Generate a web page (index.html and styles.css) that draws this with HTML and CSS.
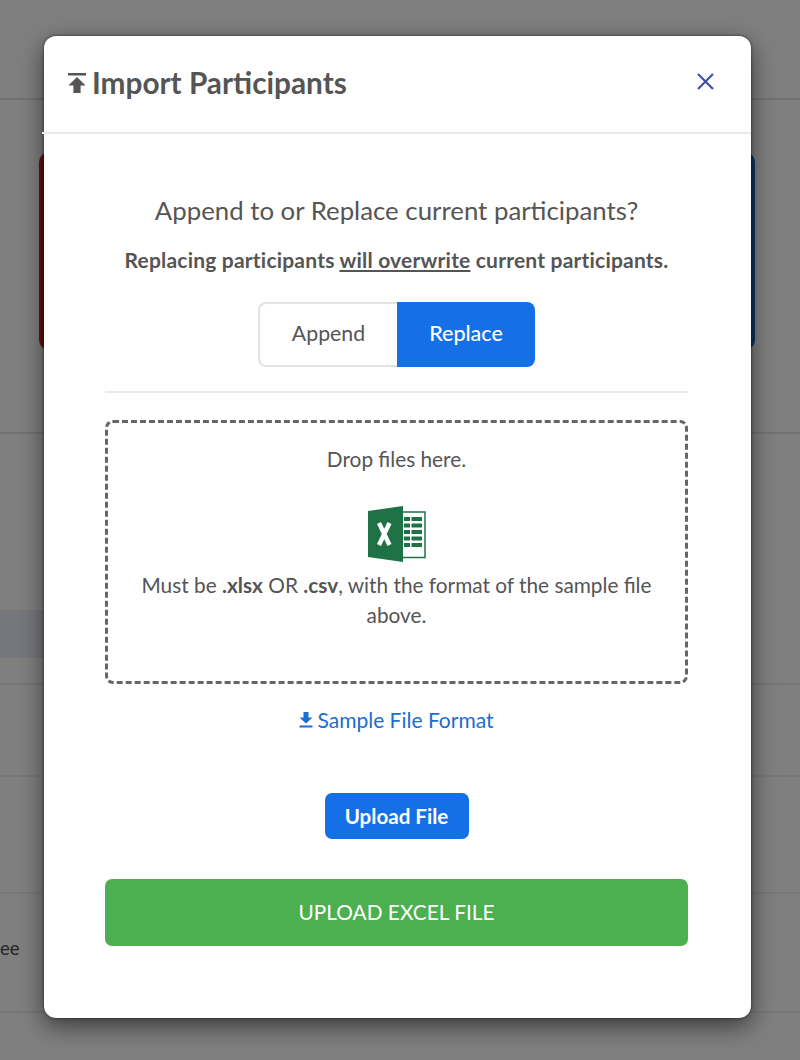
FILE: index.html
```html
<!DOCTYPE html>
<html lang="en">
<head>
    <meta charset="UTF-8">
    <title>Import Participants</title>
    <link rel="stylesheet" href="styles.css">
</head>
<body>

    <div class="page">
        <div class="row row-top"></div>
        <div class="row row-cards">
            <div class="card card-red"></div>
            <div class="card card-blue"></div>
        </div>
        <div class="row row-band">
            <div class="band"></div>
        </div>
        <div class="row row-a"></div>
        <div class="row row-b"></div>
        <div class="row row-c"><span class="cut">ee</span></div>
    </div>

    <div class="overlay">
        <div class="modal">
            <div class="modal-head">
                <h2 class="modal-title">
                    <svg class="title-icon" viewBox="0 0 18 20"><path d="M0 0h18v2.400H0zM9 4l8.600 8.400h-5V20H5.400v-7.600h-5z"/></svg>
                    <span>Import Participants</span>
                </h2>
                <button class="close" aria-label="Close">
                    <svg viewBox="0 0 17 17"><path d="M1 1l15 15M16 1L1 16"/></svg>
                </button>
            </div>
            <div class="modal-body">
                <h3 class="question">Append to or Replace current participants?</h3>
                <p class="warning">Replacing participants <u>will overwrite</u> current participants.</p>
                <div class="toggle">
                    <button class="toggle-btn">Append</button>
                    <button class="toggle-btn active">Replace</button>
                </div>
                <hr class="rule">
                <div class="dropzone">
                    <p class="drop-text">Drop files here.</p>
                    <svg class="excel" viewBox="0 0 58 56">
                        <rect x="34" y="6" width="23" height="45.500" fill="#fff" stroke="#1f7246" stroke-width="1.500"/>
                        <path fill="#1f7246" d="M36 11h6v4h-6zM43.500 11H54v4H43.500zM36 17.500h6v4h-6zM43.500 17.500H54v4H43.500zM36 24h6v4h-6zM43.500 24H54v4H43.500zM36 30.500h6v4h-6zM43.500 30.500H54v4H43.500zM36 37h6v4h-6zM43.500 37H54v4H43.500z"/>
                        <path fill="#1f7246" d="M0 5L35 0v56L0 51z"/>
                        <path d="M11 17l10.500 22M21.500 17L11 39" stroke="#fff" stroke-width="4.400" fill="none"/>
                    </svg>
                    <p class="drop-note">Must be <b>.xlsx</b> OR <b>.csv</b>, with the format of the sample file above.</p>
                </div>
                <a class="sample" href="#">
                    <svg viewBox="0 0 14 16"><path d="M4.500 0h5v5.500h4L7 11.500.5 5.500h4zM.5 13.500h13v2H.5z"/></svg>
                    <span>Sample File Format</span>
                </a>
                <button class="upload">Upload File</button>
                <button class="submit">UPLOAD EXCEL FILE</button>
            </div>
        </div>
    </div>

</body>
</html>
```

FILE: styles.css
```css
* {
    box-sizing: border-box;
}

html, body {
    margin: 0;
    height: 100%;
}

body {
    position: relative;
    overflow: hidden;
    background: #fff;
    font-family: Lato, "Open Sans", sans-serif;
    color: #555;
}

/* page behind the dialog */
.page {
    height: 1060px;
}
.row {
    border-bottom: 2px solid #e4e4e4;
}
.row-top {
    height: 100px;
}
.row-cards {
    height: 334px;
    padding: 52px 45px 0 39px;
    display: flex;
    justify-content: space-between;
}
.card {
    width: 120px;
    height: 198px;
    border-radius: 10px;
}
.card-red {
    background: #d32020;
}
.card-blue {
    background: #1c6fc8;
}
.row-band {
    height: 251px;
    padding-top: 176px;
    border-bottom-color: #ececec;
}
.band {
    width: 500px;
    height: 48px;
    background: #eceef8;
}
.row-a, .row-b, .row-c {
    border-bottom-color: #f0f0f0;
}
.row-a {
    height: 92px;
}
.row-b {
    height: 117px;
}
.row-c {
    height: 119px;
    padding-top: 43px;
}
.cut {
    font-size: 18.500px;
    color: #4a4a4a;
}

/* dialog */
.overlay {
    position: absolute;
    inset: 0;
    background: rgba(0, 0, 0, 0.5);
    padding: 36px 49px 0 44px;
}
.modal {
    height: 982px;
    background: #fff;
    border-radius: 12px;
    box-shadow: 0 0 3px rgba(0, 0, 0, 0.6), 0 8px 24px rgba(0, 0, 0, 0.55);
}
.modal-head {
    position: relative;
    height: 98px;
    padding: 0 37px 0 24px;
    border-bottom: 2px solid #e9e9e9;
    display: flex;
    align-items: center;
    justify-content: space-between;
}
.modal-head::before {
    content: "";
    position: absolute;
    left: -2px;
    bottom: -2px;
    width: 2px;
    height: 2px;
    background: #fff;
}
.modal-title {
    margin: 0 0 2px;
    font-size: 29.750px;
    font-weight: 700;
    display: flex;
    align-items: center;
    gap: 6px;
}
.modal-title span {
    margin-bottom: 2px;
}
.title-icon {
    width: 18px;
    height: 20px;
    fill: #555;
}
.close {
    width: 17px;
    height: 17px;
    padding: 0;
    border: 0;
    background: none;
    margin-bottom: 6px;
}
.close svg {
    display: block;
    fill: none;
    stroke: #3f51a5;
    stroke-width: 2.200;
}

.modal-body {
    padding: 58px 63px 0 61px;
    display: flex;
    flex-direction: column;
    align-items: center;
    text-align: center;
}
.question {
    margin: 0;
    font-size: 25.800px;
    font-weight: 400;
    line-height: 36px;
}
.warning {
    margin: 17px 0 0;
    font-size: 21px;
    font-weight: 700;
    letter-spacing: 0.2px;
    line-height: 30px;
}
.toggle {
    display: flex;
    margin-top: 27px;
}
.toggle-btn {
    width: 139px;
    height: 65px;
    padding-bottom: 4px;
    font: inherit;
    font-size: 21.300px;
    color: #555;
    background: #fff;
    border: 2px solid #e2e2e2;
    border-radius: 8px 0 0 8px;
    border-right: 0;
}
.toggle-btn.active {
    width: 138px;
    font-size: 21.500px;
    font-weight: 500;
    color: #fff;
    background: #1570e8;
    border: 0;
    border-radius: 0 8px 8px 0;
}
.rule {
    width: 100%;
    margin: 24px 0 27px;
    border: 0;
    border-top: 2px solid #e9e9e9;
}
.dropzone {
    width: 100%;
    height: 264px;
    padding: 21px 30px 0;
    border: 3px dashed #666;
    border-radius: 8px;
    font-size: 20.800px;
}
.drop-text {
    margin: 0;
    line-height: 30px;
}
.excel {
    display: block;
    width: 58px;
    height: 56px;
    margin: 32px auto 0;
}
.drop-note {
    margin: 8px 0 0;
    line-height: 30px;
}
.sample {
    display: flex;
    align-items: center;
    gap: 4px;
    margin-top: 21px;
    font-size: 21px;
    line-height: 30px;
    color: #1a6fd0;
    text-decoration: none;
}
.sample svg {
    width: 14px;
    height: 16px;
    fill: #1a6fd0;
}
.upload {
    width: 144px;
    height: 46px;
    margin-top: 58px;
    font: inherit;
    font-size: 20.600px;
    font-weight: 700;
    color: #fff;
    background: #1570e8;
    border: 0;
    border-radius: 7px;
}
.submit {
    width: 100%;
    height: 67px;
    margin-top: 40px;
    padding-bottom: 3px;
    font: inherit;
    font-size: 20.850px;
    color: #fff;
    background: #4caf50;
    border: 0;
    border-radius: 7px;
}
```
